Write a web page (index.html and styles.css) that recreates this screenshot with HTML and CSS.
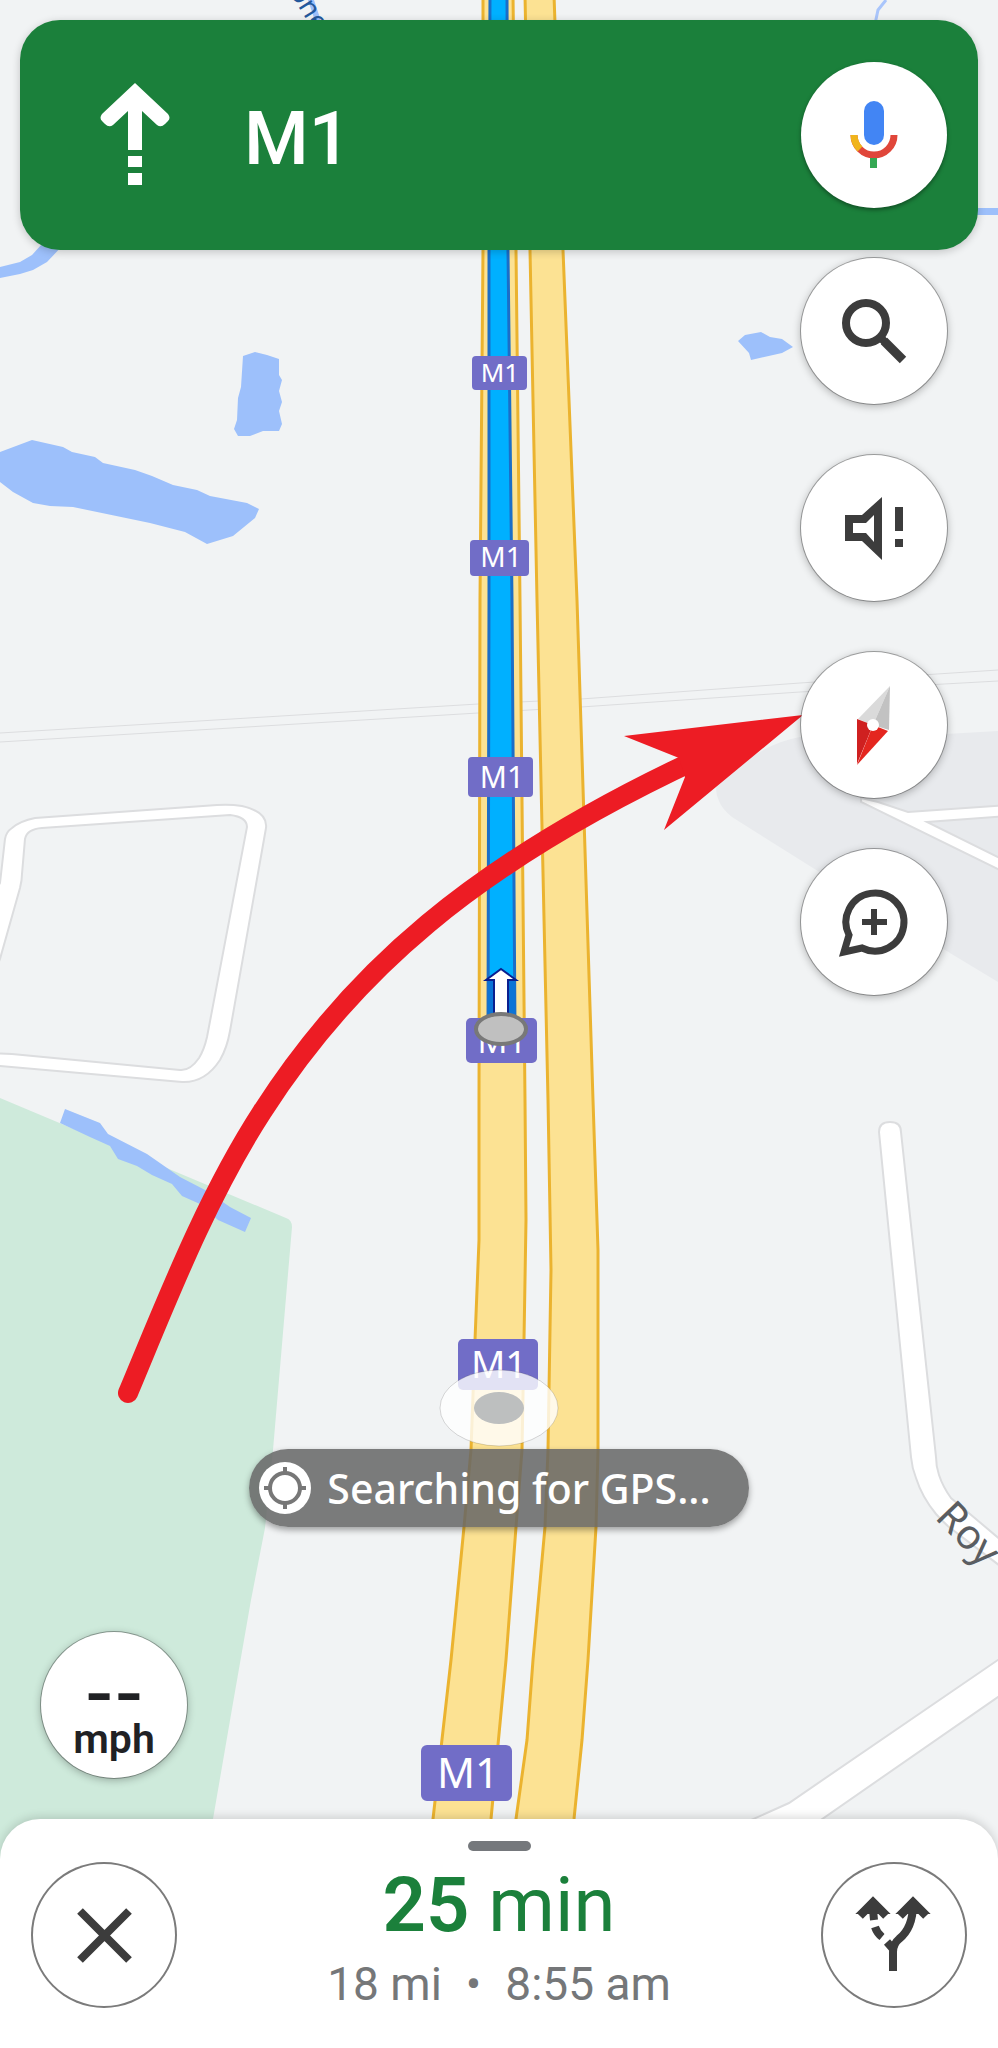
FILE: index.html
```html
<!DOCTYPE html>
<html lang="en">
<head>
    <meta charset="UTF-8">
    <meta name="viewport" content="width=device-width, initial-scale=1.0">
    <title>Navigation - M1</title>
    <link rel="stylesheet" href="styles.css">
</head>
<body>
    <div class="screen">

        <!-- Map -->
        <svg class="map" viewBox="0 0 998 2048" preserveAspectRatio="xMidYMin slice" role="img" aria-label="Map of the M1">
            <!-- Land areas -->
            <path class="park" d="M0 1098 L286 1218 Q292 1220 292 1227 L273 1450 L265 1528 L251 1600 L233 1703 L213 1819 L205 1870 L0 1870 Z"/>
            <path class="built" d="M998 731 L946 734 L800 737 Q778 741 760 752 L722 771 Q712 788 719 801 Q722 809 732 817 L813 868 L950 953 L998 982 Z"/>

            <!-- Water -->
            <g class="water">
                <path d="M0 267 L20 262 L32 255 L42 244 L64 244 L47 262 L33 270 L20 274 L0 278 Z"/>
                <path d="M243 356 L255 352 L267 355 L279 359 L279 375 L282 380 L279 391 L282 402 L279 411 L282 424 L279 431 L263 431 L250 436 L238 436 L234 429 L237 420 L238 398 L241 387 Z"/>
                <path d="M0 452 L32 440 L63 447 L72 452 L95 457 L103 463 L135 470 L152 476 L173 485 L197 490 L210 496 L247 503 L259 509 L255 518 L233 536 L207 544 L185 532 L150 523 L73 507 L50 506 L33 503 L13 492 L0 482 Z"/>
                <path d="M738 341 L745 335 L761 332 L770 337 L782 339 L793 347 L782 353 L751 360 L749 353 Z"/>
                <path d="M65 1109 L100 1123 L108 1134 L147 1154 L180 1177 L207 1191 L230 1207 L251 1218 L245 1232 L218 1220 L200 1204 L182 1196 L172 1184 L152 1175 L137 1166 L118 1159 L110 1146 L90 1137 L60 1123 Z"/>
                <path d="M970 208 H998 V215 H970 Z"/>
                <path d="M308 0 L314 0 L322 24 L316 24 Z"/>
            </g>
            <path class="stream" d="M875 24 L878 10 L886 0"/>
            <text class="water-label" transform="translate(289 -8) rotate(58)">one</text>

            <!-- Railway -->
            <path class="rail" d="M0 733 L150 724 L478 704 L581 699 L800 683 L998 670"/>
            <path class="rail" d="M0 742 L478 713 L581 707 L800 692 L998 681"/>

            <!-- Minor roads -->
            <g class="road">
                <path fill-rule="evenodd" d="M-10 900 L0 883 L5 839 Q6 832 12 828 Q20 821 35 818 L217 805 Q230 804 242 806 Q268 812 266 828 L230 1031 Q227 1048 220 1060 Q205 1083 182 1082 L0 1066 L-10 1065 Z M-10 985 L0 959 L20 888 Q22 880 22 874 L25 839 Q27 829 42 828 L230 815 Q247 817 247 827 L207 1037 Q204 1050 199 1058 Q190 1071 180 1070 L12 1054 L-10 1053 Z"/>
                <path d="M861 798 L878 802 L908 812 L1008 805 L1008 816 L927 822 L1008 862 L1008 874 L861 802 Z"/>
                <path d="M879 1132 Q879 1122 890 1122 Q901 1122 901 1132 L936 1457 Q936 1466 939 1475 Q943 1487 951 1498 L1008 1546 L1008 1572 L949 1527 Q942 1521 936 1514 Q922 1497 916 1478 Q912 1468 911 1457 Z"/>
                <path d="M1008 1653 L789 1803 L740 1825 L740 1840 L792 1840 L1008 1690 Z"/>
            </g>
            <text class="road-label" transform="translate(934 1518) rotate(46)">Roy</text>

            <!-- M1, both carriageways -->
            <path class="motorway" d="M483 -5 L483 250 L480 600 L479 1100 L479 1240 L475 1340 L471 1450 L464 1527 L451 1660 L433 1819 L430 1850 L487 1850 L491 1819 L506 1660 L516 1527 L522 1450 L524 1340 L526 1220 L525 1100 L520 600 L516 250 L513 -5 Z"/>
            <path class="motorway" d="M525 -5 L530 250 L537 600 L548 1100 L551 1270 L548 1450 L545 1527 L533 1660 L527 1740 L516 1819 L512 1850 L570 1850 L574 1819 L582 1740 L588 1660 L596 1527 L598 1450 L598 1250 L593 1100 L577 600 L563 250 L554 -5 Z"/>

            <!-- Route -->
            <path class="route" d="M490 -5 L489 250 L489 600 L488 1030 L515 1030 L512 600 L508 250 L507 -5 Z"/>
            <path class="route-start" d="M488 978 H515 V1030 H488 Z"/>

            <!-- Road shields -->
            <g class="shields">
                <rect x="472" y="356" width="55" height="34" rx="4"/>
                <text x="500" y="382" font-size="26">M1</text>
                <rect x="470" y="540" width="59" height="36" rx="4"/>
                <text x="501" y="567" font-size="28">M1</text>
                <rect x="468" y="757" width="65" height="40" rx="4"/>
                <text x="502" y="788" font-size="30">M1</text>
                <rect x="466" y="1018" width="71" height="45" rx="5"/>
                <text x="502" y="1053" font-size="33">M1</text>
                <rect x="458" y="1339" width="80" height="51" rx="5"/>
                <text x="499" y="1378" font-size="38">M1</text>
                <rect x="421" y="1745" width="91" height="56" rx="6"/>
                <text x="468" y="1788" font-size="42">M1</text>
            </g>

            <!-- Heading arrow and position -->
            <path class="heading" d="M501 969 L516 980 H508 V1018 H494 V980 H486 Z"/>
            <ellipse class="position" cx="501" cy="1029" rx="25" ry="15"/>
            <ellipse class="pulse" cx="499" cy="1408" rx="59" ry="38"/>
            <ellipse class="pulse-core" cx="499" cy="1408" rx="25" ry="16"/>

            <!-- Arrow that points at the compass -->
            <path class="pointer-line" d="M128 1393 C165 1305 205 1200 262 1112 C350 975 470 865 700 758"/>
            <path class="pointer-head" d="M803 715 L624 736 L679 758 L685 777 L664 830 Z"/>
        </svg>

        <header class="direction">
            <svg class="direction-arrow" viewBox="0 0 70 104" aria-hidden="true">
                <path d="M35 0 L68 31 Q71 35 68 38 L65 41 Q61 45 57 42 L42 28 V67 H28 V28 L13 42 Q9 45 5 41 L2 38 Q-1 35 2 31 Z"/>
                <path d="M28 73 H42 V84 H28 Z M28 90 H42 V102 H28 Z"/>
            </svg>
            <h1 class="direction-road">M1</h1>
            <button class="round-btn mic-btn" aria-label="Voice search">
                <svg viewBox="0 0 146 146">
                    <rect x="63" y="39" width="20" height="44" rx="10" fill="#4285f4"/>
                    <path d="M53 73 A20 20 0 0 0 93 73" fill="none" stroke="#e0463a" stroke-width="7"/>
                    <path d="M53 73 A20 20 0 0 0 59 87" fill="none" stroke="#f0b41c" stroke-width="7"/>
                    <path d="M69 96 H76 V106 H69 Z" fill="#34a853"/>
                </svg>
            </button>
        </header>

        <main class="overlay">
            <div class="controls">
                <button class="round-btn" aria-label="Search along route">
                    <svg viewBox="0 0 146 146" class="line-icon">
                        <circle cx="65" cy="65" r="20"/>
                        <path d="M79 79 L84 84"/>
                        <path d="M83 83 L102 102" stroke-width="9"/>
                    </svg>
                </button>
                <button class="round-btn" aria-label="Alerts only">
                    <svg viewBox="0 0 146 146" class="solid-icon">
                        <path fill-rule="evenodd" d="M44 60 H61 L81 42 V105 L61 86 H44 Z M52 68 V78 H65 L73 87 V60 L65 68 Z"/>
                        <path d="M94 52 H102 V76 H94 Z M94 84 H102 V92 H94 Z"/>
                    </svg>
                </button>
                <button class="round-btn" aria-label="Compass">
                    <svg viewBox="0 0 146 146">
                        <path d="M89 34 L57 67 L72 73 Z" fill="#dadada"/>
                        <path d="M89 34 L72 73 L88 78 Z" fill="#c2c2c2"/>
                        <path d="M56 67 L72 73 L56 112 Z" fill="#cf2020"/>
                        <path d="M72 73 L87 79 L56 113 Z" fill="#e4261f"/>
                        <circle cx="72" cy="73" r="6" fill="#fff"/>
                    </svg>
                </button>
                <button class="round-btn" aria-label="Add a report">
                    <svg viewBox="0 0 146 146" class="line-icon">
                        <path d="M48 86 A29 29 0 1 1 61 99 L43 103 Z" stroke-width="7"/>
                        <path d="M61 73 H86 M73 60 V86" stroke-width="6"/>
                    </svg>
                </button>
            </div>

            <div class="gps" role="status">
                <svg class="gps-icon" viewBox="0 0 52 52" aria-hidden="true">
                    <circle cx="26" cy="26" r="26" fill="#fff"/>
                    <circle cx="26" cy="26" r="15" fill="none" stroke="#777" stroke-width="4"/>
                    <path d="M26 5 V10 M26 42 V47 M5 26 H10 M42 26 H47" stroke="#777" stroke-width="4"/>
                </svg>
                <span>Searching for GPS...</span>
            </div>

            <div class="speed">
                <span class="speed-value">--</span>
                <span class="speed-unit">mph</span>
            </div>
        </main>

        <footer class="sheet">
            <button class="round-btn outline-btn" aria-label="Close navigation">
                <svg viewBox="0 0 146 146" class="line-icon">
                    <path d="M49 49 L98 98 M98 49 L49 98"/>
                </svg>
            </button>
            <div class="trip">
                <div class="handle"></div>
                <p class="trip-time"><b>25</b> min</p>
                <p class="trip-info"><span>18 mi</span><span>•</span><span>8:55 am</span></p>
            </div>
            <button class="round-btn outline-btn" aria-label="Alternative routes">
                <svg viewBox="0 0 146 146" class="line-icon">
                    <path d="M72 109 V90 Q72 82 78 77 Q92 66 92 42"/>
                    <path d="M79 54 L92 41 L105 54 M39 54 L52 41 L65 54"/>
                    <path d="M52 42 Q52 50 53 58 M54 65 Q56 71 61 75 M66 80 L73 88"/>
                    <path d="M84 48 L92 40 L100 48 Z M44 48 L52 40 L60 48 Z" class="tip"/>
                </svg>
            </button>
        </footer>
    </div>
</body>
</html>
```
FILE: styles.css
```css
body {
    margin: 0;
    font-family: Roboto, 'Noto Sans', sans-serif;
    background-color: #f1f3f4;
}

h1, p {
    margin: 0;
}

.screen {
    position: relative;
    display: flex;
    flex-direction: column;
    min-height: 100vh;
    overflow: hidden;
}

/* Map */
.map {
    position: absolute;
    top: 0;
    left: 0;
    width: 100%;
    height: 100%;
    font-family: 'Noto Sans', sans-serif;
}

.park {
    fill: #ceeadb;
}

.built {
    fill: #e8eaed;
}

.water {
    fill: #9dc0fb;
}

.stream {
    fill: none;
    stroke: #a9c5fb;
    stroke-width: 3;
}

.water-label {
    font-size: 27px;
    fill: #23589c;
}

.rail {
    fill: none;
    stroke: #dcdddf;
    stroke-width: 1;
}

.road {
    fill: #fff;
    stroke: #dcdddf;
    stroke-width: 2;
}

.road-label {
    font-size: 41px;
    fill: #5a5d61;
}

.motorway {
    fill: #fce293;
    stroke: #ebb32f;
    stroke-width: 3;
}

.route {
    fill: #00b0ff;
    stroke: #1b6ec8;
    stroke-width: 3;
}

.route-start {
    fill: #0b74d6;
}

.shields rect {
    fill: #716dc7;
}

.shields text {
    fill: #fff;
    text-anchor: middle;
}

.heading {
    fill: #fff;
    stroke: #0a1f8f;
    stroke-width: 2;
}

.position {
    fill: #c0c0c0;
    stroke: #787878;
    stroke-width: 4;
}

.pulse {
    fill: #fff;
    fill-opacity: 0.8;
    stroke: rgba(0, 0, 0, 0.15);
    stroke-width: 1;
}

.pulse-core {
    fill: #bdbfbf;
}

.pointer-line {
    fill: none;
    stroke: #ed1c24;
    stroke-width: 20;
    stroke-linecap: round;
}

.pointer-head {
    fill: #ed1c24;
}

/* Round buttons */
.round-btn {
    flex: none;
    width: 146px;
    height: 146px;
    padding: 0;
    border: none;
    border-radius: 50%;
    background-color: #fff;
    box-shadow: 0 0 0 1px rgba(0, 0, 0, 0.3), 0 2px 8px rgba(0, 0, 0, 0.3);
    cursor: pointer;
}

.round-btn svg {
    display: block;
    width: 100%;
    height: 100%;
}

.mic-btn {
    margin-left: auto;
    box-shadow: 0 2px 4px rgba(0, 0, 0, 0.4);
}

.outline-btn {
    box-shadow: inset 0 0 0 2px #7b7b7b;
}

.line-icon {
    fill: none;
    stroke: #3c3c3c;
    stroke-width: 8;
}

.solid-icon,
.line-icon .tip {
    fill: #3c3c3c;
}

/* Direction banner */
.direction {
    position: relative;
    display: flex;
    align-items: center;
    margin: 20px 20px 8px;
    padding: 42px 31px 42px 80px;
    border-radius: 40px;
    background-color: #1b803b;
    color: #fff;
    box-shadow: 0 2px 8px rgba(0, 0, 0, 0.2);
}

.direction-arrow {
    width: 70px;
    height: 104px;
    fill: #fff;
}

.direction-road {
    margin-left: 74px;
    padding-top: 8px;
    font-size: 74px;
    line-height: 90px;
    font-weight: 500;
}

/* What lies over the map */
.overlay {
    position: relative;
    flex: 1;
    display: flex;
    flex-direction: column;
    padding-bottom: 41px;
}

.controls {
    display: flex;
    flex-direction: column;
    align-items: flex-end;
    gap: 51px;
    padding-right: 51px;
}

.gps {
    display: flex;
    align-items: center;
    align-self: center;
    gap: 16px;
    height: 78px;
    margin-top: auto;
    padding: 0 38px 0 10px;
    border-radius: 39px;
    background-color: rgba(102, 102, 102, 0.86);
    box-shadow: 0 3px 6px rgba(0, 0, 0, 0.35);
    color: #fff;
    font-family: 'Noto Sans', sans-serif;
    font-size: 41px;
    font-weight: 500;
}

.gps-icon {
    width: 52px;
    height: 52px;
}

.speed {
    box-sizing: border-box;
    display: flex;
    flex-direction: column;
    align-items: center;
    justify-content: center;
    width: 146px;
    height: 146px;
    margin: 105px 0 0 41px;
    padding-top: 12px;
    border-radius: 50%;
    background-color: #fff;
    box-shadow: 0 0 0 1px rgba(0, 0, 0, 0.3), 0 2px 8px rgba(0, 0, 0, 0.3);
    color: #202124;
}

.speed-value {
    font-family: Inter, sans-serif;
    font-size: 64px;
    line-height: 56px;
    font-weight: 600;
}

.speed-unit {
    font-size: 41px;
    line-height: 36px;
    font-weight: 600;
}

/* Bottom sheet */
.sheet {
    position: relative;
    display: flex;
    align-items: flex-end;
    justify-content: space-between;
    padding: 22px 31px 40px;
    border-radius: 40px 40px 0 0;
    background-color: #fff;
    box-shadow: 0 -2px 10px rgba(0, 0, 0, 0.15);
}

.trip {
    display: flex;
    flex-direction: column;
    align-items: center;
}

.handle {
    width: 63px;
    height: 10px;
    border-radius: 5px;
    background-color: #75787c;
}

.trip-time {
    padding: 8px 0 10px;
    color: #1b803b;
    font-size: 76px;
    line-height: 92px;
}

.trip-time b {
    font-weight: 600;
}

.trip-info {
    display: flex;
    gap: 24px;
    color: #757779;
    font-size: 46px;
    line-height: 47px;
}
```
